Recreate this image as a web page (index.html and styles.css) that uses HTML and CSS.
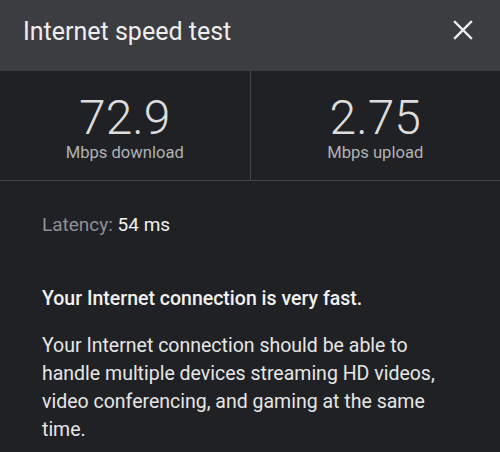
FILE: index.html
```html
<!DOCTYPE html>
<html lang="en">
<head>
    <meta charset="UTF-8">
    <meta name="viewport" content="width=device-width, initial-scale=1.0">
    <title>Internet speed test</title>
    <link rel="stylesheet" href="styles.css">
</head>
<body>
    <div class="header">
        <h1 class="title">Internet speed test</h1>
        <button class="close" aria-label="Close">
            <svg width="20" height="20" viewBox="0 0 20 20">
                <path d="M2 2 L18 18 M18 2 L2 18" stroke="#eeeeee" stroke-width="2.4" stroke-linecap="square"/>
            </svg>
        </button>
    </div>

    <div class="metrics">
        <div class="metric">
            <div class="value">72.9</div>
            <div class="unit">Mbps download</div>
        </div>
        <div class="metric">
            <div class="value">2.75</div>
            <div class="unit">Mbps upload</div>
        </div>
    </div>

    <div class="details">
        <p class="latency"><span class="label">Latency:</span> 54 ms</p>
        <p class="verdict">Your Internet connection is very fast.</p>
        <p class="desc">Your Internet connection should be able to handle multiple devices streaming HD videos, video conferencing, and gaming at the same time.</p>
    </div>
</body>
</html>
```

FILE: styles.css
```css
:root {
    --bg: #202124;
    --header-bg: #3c3d41;
    --line: #46474b;
    --text: #e8eaed;
}

body {
    margin: 0;
    background: var(--bg);
    color: var(--text);
    font-family: Roboto, "Liberation Sans", sans-serif;
    width: 500px;
    height: 452px;
    overflow: hidden;
}

.header {
    height: 71px;
    background: var(--header-bg);
    display: flex;
    align-items: center;
    justify-content: space-between;
    padding: 0 27px 0 23px;
    box-sizing: border-box;
}

.title {
    margin: 0;
    font-size: 25px;
    font-weight: 400;
    color: #eeeeee;
    position: relative;
    top: -4px;
}

.close {
    background: none;
    border: 0;
    padding: 0;
    width: 20px;
    height: 20px;
    position: relative;
    top: -6px;
}

.close svg {
    display: block;
}

.metrics {
    display: flex;
    border-bottom: 1px solid var(--line);
}

.metric {
    flex: 1;
    display: flex;
    flex-direction: column;
    align-items: center;
    padding: 24px 0 0;
    height: 109px;
    box-sizing: border-box;
}

.metric + .metric {
    border-left: 1px solid var(--line);
}

.value {
    font-size: 48px;
    font-weight: 300;
    line-height: 46px;
    color: #dcdcdc;
}

.unit {
    margin-top: 1px;
    font-size: 16.6px;
    line-height: 22px;
    color: #b0b2b5;
}

.details {
    padding: 32px 42px 0;
}

.details p {
    margin: 0;
}

.latency {
    font-size: 19px;
    line-height: 24px;
    color: #f1f1f1;
}

.latency .label {
    color: #8e9095;
}

.verdict {
    margin-top: 48px !important;
    font-size: 19.5px;
    line-height: 28px;
    font-weight: 500;
    color: #f1f1f1;
}

.desc {
    margin-top: 19px !important;
    font-size: 19.5px;
    line-height: 28px;
    color: #e6e6e6;
}
```
